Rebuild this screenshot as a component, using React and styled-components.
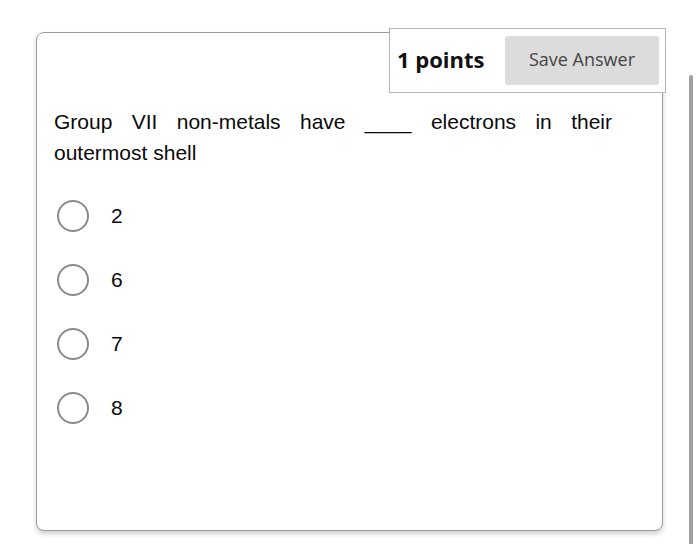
import React from "react";
import styled, { createGlobalStyle } from "styled-components";

const Global = createGlobalStyle`
  html, body { margin: 0; padding: 0; background: #fff; }
  body { width: 700px; height: 544px; overflow: hidden; }
`;

const Page = styled.div`
  display: flex;
  align-items: flex-start;
  height: 544px;
  padding: 32px 0 0 36px;
  box-sizing: border-box;
`;

const Card = styled.div`
  position: relative;
  width: 627px;
  height: 499px;
  box-sizing: border-box;
  border: 1px solid #9a9a9a;
  border-radius: 8px;
  background: #fff;
  box-shadow: 0 3px 5px rgba(0, 0, 0, 0.18);
  padding: 73px 50px 0 17px;
`;

const Header = styled.div`
  position: absolute;
  top: -5px;
  right: -4px;
  width: 277px;
  height: 65px;
  box-sizing: border-box;
  border: 1px solid #b5b5b5;
  background: #fff;
  display: flex;
  align-items: center;
  justify-content: space-between;
  padding: 7px 6px 7px 7px;
`;

const Points = styled.span`
  font-family: "Open Sans", sans-serif;
  font-weight: 700;
  font-size: 22px;
  color: #111;
  margin-top: -4px;
`;

const SaveButton = styled.button`
  width: 154px;
  height: 49px;
  border: none;
  border-radius: 3px;
  background: #dcdcdc;
  font-family: "Open Sans", sans-serif;
  font-size: 18px;
  color: #444;
  padding: 0 0 3px;
`;

const Question = styled.p`
  margin: 0;
  font-family: "Liberation Sans", Arial, sans-serif;
  font-size: 21px;
  line-height: 31px;
  color: #0a0a0a;
  text-align: justify;
`;

const Options = styled.div`
  display: flex;
  flex-direction: column;
  margin-top: 16px;
`;

const Option = styled.label`
  display: flex;
  align-items: center;
  height: 64px;
  gap: 22px;
  padding-left: 3px;
`;

const Radio = styled.span`
  width: 32px;
  height: 32px;
  box-sizing: border-box;
  border: 2px solid #8a8a8a;
  border-radius: 50%;
  flex: none;
`;

const OptionText = styled.span`
  font-family: "Liberation Sans", Arial, sans-serif;
  font-size: 21px;
  color: #0a0a0a;
`;

const Scrollbar = styled.div`
  margin-left: 26px;
  margin-top: 43px;
  width: 4px;
  height: 480px;
  background: #a0a0a0;
  border-radius: 2px 2px 0 0;
`;

const options = ["2", "6", "7", "8"];

export default function App() {
  return (
    <>
      <Global />
      <Page>
        <Card>
          <Header>
            <Points>1 points</Points>
            <SaveButton>Save Answer</SaveButton>
          </Header>
          <Question>
            Group VII non-metals have ____ electrons in their outermost shell
          </Question>
          <Options>
            {options.map((o) => (
              <Option key={o}>
                <Radio />
                <OptionText>{o}</OptionText>
              </Option>
            ))}
          </Options>
        </Card>
        <Scrollbar />
      </Page>
    </>
  );
}
